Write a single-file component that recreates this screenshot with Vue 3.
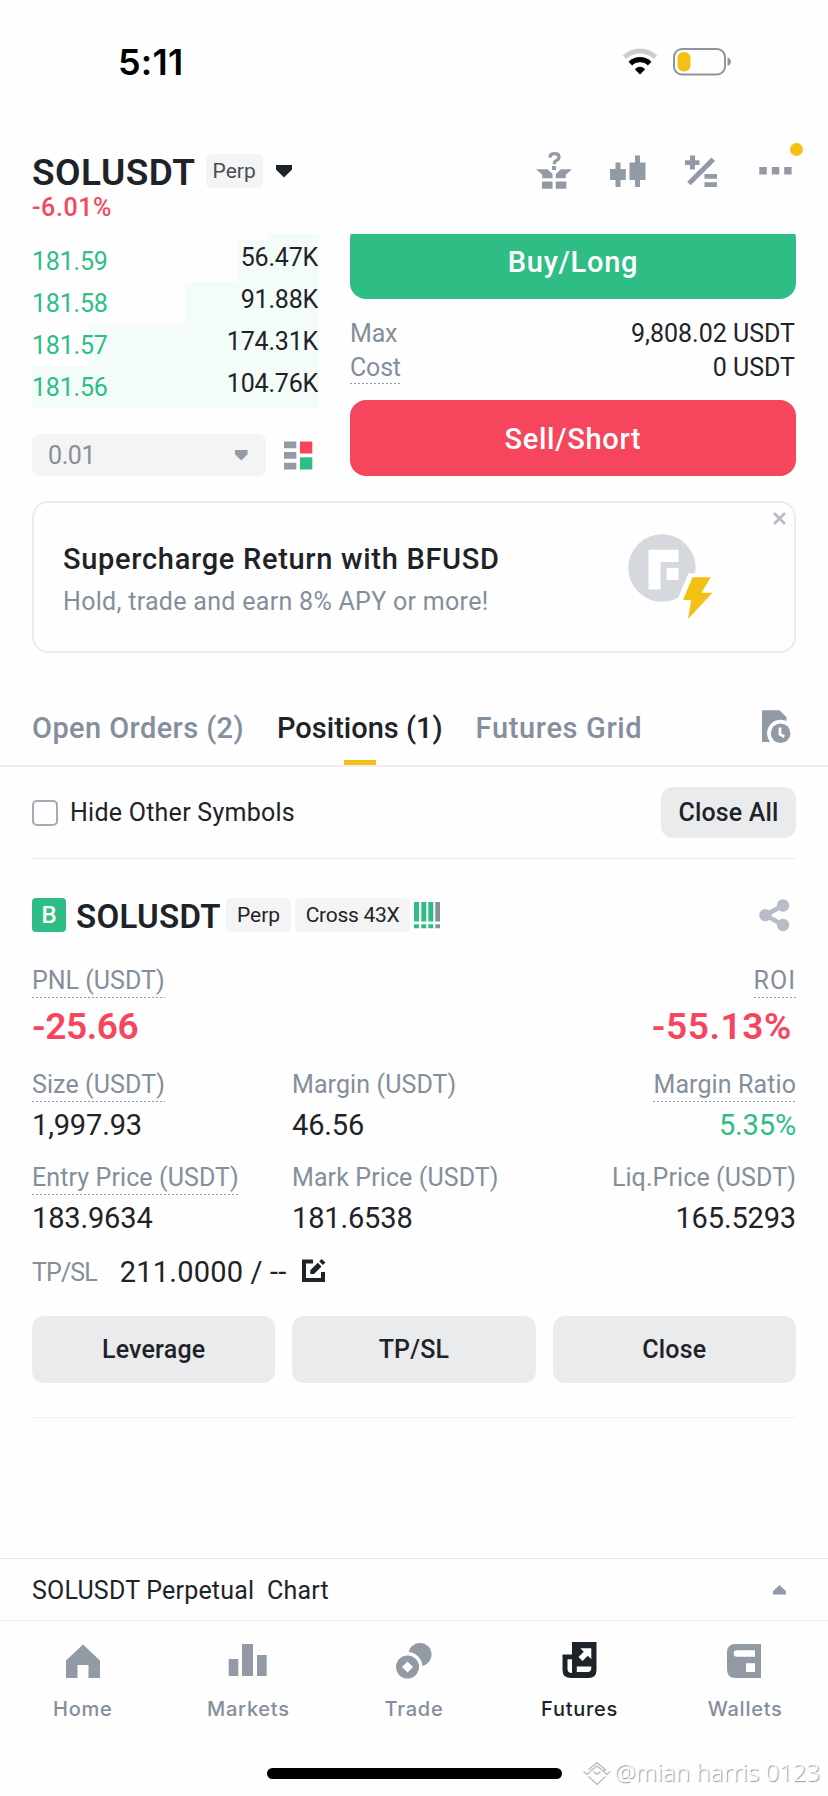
<script setup>
    import {ref} from 'vue'

    const pair = ref('SOLUSDT')
    const hideOthers = ref(false)
    const activeTab = ref('positions')
    const activeNav = ref('Futures')

    // bid depth is the width of the green bar in px
    const bids = ref([
        { price: '181.59', amount: '56.47K', depth: 82 },
        { price: '181.58', amount: '91.88K', depth: 134 },
        { price: '181.57', amount: '174.31K', depth: 230 },
        { price: '181.56', amount: '104.76K', depth: 287 },
    ])

    const tabs = [
        { id: 'orders', label: 'Open Orders (2)' },
        { id: 'positions', label: 'Positions (1)' },
        { id: 'grid', label: 'Futures Grid' },
    ]

    const stats = [
        { label: 'Size (USDT)', value: '1,997.93', hint: true },
        { label: 'Margin (USDT)', value: '46.56' },
        { label: 'Margin Ratio', value: '5.35%', hint: true, green: true },
        { label: 'Entry Price (USDT)', value: '183.9634', hint: true },
        { label: 'Mark Price (USDT)', value: '181.6538' },
        { label: 'Liq.Price (USDT)', value: '165.5293' },
    ]

    const actions = ['Leverage', 'TP/SL', 'Close']
    const navItems = ['Home', 'Markets', 'Trade', 'Futures', 'Wallets']
</script>

<template>
    <main class="screen">
        <div class="status-bar">
            <span class="time">5:11</span>
            <div class="status-icons">
                <svg class="wifi" width="36" height="27" viewBox="0 0 36 27">
                    <path d="M2.500 9.300 A22.500 22.500 0 0 1 33.500 9.300" fill="none" stroke="#c9ccd1" stroke-width="5"/>
                    <path d="M8.300 15.600 A14 14 0 0 1 27.700 15.600" fill="none" stroke="#000" stroke-width="5.200"/>
                    <path d="M12.800 21.200 Q18 16.400 23.200 21.200 L18 26.500 Z" fill="#000"/>
                </svg>
                <svg class="battery" width="58" height="28" viewBox="0 0 58 28">
                    <rect x="1" y="1" width="51" height="25.500" rx="8" fill="none" stroke="#8f949a" stroke-width="2"/>
                    <rect x="4.500" y="4" width="13" height="19.500" rx="6" fill="#f5c014"/>
                    <path d="M54.500 9.500 Q58 11 58 13.800 Q58 16.500 54.500 18 Z" fill="#8f949a"/>
                </svg>
            </div>
        </div>

        <header class="top-bar">
            <div class="pair">
                <div class="pair-line">
                    <h1>{{ pair }}</h1>
                    <span class="tag">Perp</span>
                    <svg width="16" height="13" viewBox="0 0 16 13"><path d="M0 0H16V4.500L8 12.500L0 4.500Z" fill="#1e2329"/></svg>
                </div>
                <div class="change">-6.01%</div>
            </div>
            <div class="tools">
                <svg class="gift" width="36" height="37" viewBox="0 0 36 37" fill="#929aa5">
                    <path d="M13.800 5.500 Q14.200 1.600 18.700 1.600 Q23 1.600 23 5 Q23 7.300 20.500 8.500 Q18.200 9.500 18.200 12.300" fill="none" stroke="#929aa5" stroke-width="3.200"/>
                    <path d="M16 14H20V18H16Z"/>
                    <path d="M0 17.200H11.500L16.500 22V26.200H6.300V22.800Z"/>
                    <path d="M36 17.200H24.800L19.800 22V26.200H29.800V22.800Z"/>
                    <path d="M6 29.500H16.500V36.700H6ZM19.800 29.500H30.300V36.700H19.800Z"/>
                </svg>
                <svg class="candles" width="36" height="33" viewBox="0 0 36 33" fill="#929aa5">
                    <path d="M5.500 7.500H10.500V14H15.800V25H10.500V32H5.500V25H0V14H5.500Z"/>
                    <path d="M25 .5H30V7.500H35.500V25H30V32H25V25H19.500V7.500H25Z"/>
                </svg>
                <svg class="calc" width="33" height="33" viewBox="0 0 33 33" fill="#929aa5">
                    <path d="M5 .5H10V5.300H14.500V10H10V14.500H5V10H0V5.300H5Z"/>
                    <path d="M26.500 2.500L30 6L5.700 30.300L2.200 26.800Z"/>
                    <path d="M19.500 19H32V23.700H19.500ZM19.500 27.300H32V32H19.500Z"/>
                </svg>
                <div class="more">
                    <svg width="33" height="8" viewBox="0 0 33 8" fill="#929aa5">
                        <path d="M.3 0H7.800V7.600H.3ZM12.800 0H20.300V7.600H12.800ZM25.200 0H32.600V7.600H25.200Z"/>
                    </svg>
                    <i class="dot"></i>
                </div>
            </div>
        </header>

        <section class="trade">
            <div class="book">
                <div class="sliver"></div>
                <div v-for="bid in bids" :key="bid.price" class="bid">
                    <div class="depth" :style="{ width: bid.depth + 'px' }"></div>
                    <span class="price">{{ bid.price }}</span>
                    <span class="amount">{{ bid.amount }}</span>
                </div>
                <div class="book-foot">
                    <div class="step">
                        <span>0.01</span>
                        <svg width="13" height="11" viewBox="0 0 13 11"><path d="M0 0H12.600V4.300L6.300 10.500L0 4.300Z" fill="#929aa5"/></svg>
                    </div>
                    <svg width="29" height="29" viewBox="0 0 29 29">
                        <path d="M0 .5H12.300V7.200H0ZM0 11H12.300V17.800H0ZM0 21.700H12.300V28.500H0Z" fill="#929aa5"/>
                        <path d="M16 .5H28.300V12.500H16Z" fill="#f6465d"/>
                        <path d="M16 16.300H28.300V28.500H16Z" fill="#2ebd85"/>
                    </svg>
                </div>
            </div>
            <div class="order">
                <div class="buy-clip"><button class="big buy">Buy/Long</button></div>
                <div class="info">
                    <div class="info-row"><span class="grey">Max</span><span class="amt">9,808.02 USDT</span></div>
                    <div class="info-row"><span class="grey hint">Cost</span><span class="amt">0 USDT</span></div>
                </div>
                <button class="big sell">Sell/Short</button>
            </div>
        </section>

        <section class="banner">
            <div class="banner-text">
                <h2>Supercharge Return with BFUSD</h2>
                <p>Hold, trade and earn 8% APY or more!</p>
            </div>
            <svg class="coin" width="86" height="88" viewBox="0 0 86 88">
                <circle cx="34" cy="34" r="33.700" fill="#d5d8dd"/>
                <path d="M20.500 15.800H50.500V28H32.500V55.500H20.500ZM38.500 34H50.500V46H38.500Z" fill="#fff"/>
                <path d="M60.500 39.300H70V80L48 69.500Z" fill="#fff"/>
                <path d="M64.500 43.300H82.700L73.500 58.700H84.500L60 85L63.200 66H55Z" fill="#f5c014"/>
            </svg>
            <svg class="close-icon" width="13" height="13" viewBox="0 0 13 13"><path d="M1 1L12 12M12 1L1 12" stroke="#b7bdc6" stroke-width="2.700"/></svg>
        </section>

        <nav class="tabs">
            <button v-for="tab in tabs" :key="tab.id" :class="['tab', tab.id, { active: activeTab === tab.id }]" @click="activeTab = tab.id">{{ tab.label }}</button>
            <svg class="history" width="29" height="34" viewBox="0 0 29 34">
                <path d="M0 .3H17.500L24.500 7.300V32H0Z" fill="#929aa5"/>
                <circle cx="18.600" cy="23.300" r="13.500" fill="#fff"/>
                <circle cx="18.600" cy="23.300" r="9.800" fill="#929aa5"/>
                <path d="M18 17.500V24.300L22.300 26.800" fill="none" stroke="#fff" stroke-width="2.800"/>
            </svg>
        </nav>

        <div class="filter">
            <label><i class="box" @click="hideOthers = !hideOthers"></i><span>Hide Other Symbols</span></label>
            <button class="close-all">Close All</button>
        </div>

        <section class="position">
            <div class="position-head">
                <span class="side">B</span>
                <h3>{{ pair }}</h3>
                <span class="tag wide">Perp</span>
                <span class="tag wide cross">Cross 43X</span>
                <svg class="risk" width="28" height="27" viewBox="0 0 28 27">
                    <path d="M0 0H5V19.500H0ZM7.300 0H12.300V19.500H7.300ZM14.300 0H19.300V19.500H14.300ZM0 22.300H5V26.300H0ZM7.300 22.300H12.300V26.300H7.300ZM14.300 22.300H19.300V26.300H14.300Z" fill="#2ebd85"/>
                    <path d="M21.300 0H26V19.500H21.300ZM21.300 22.300H26V26.300H21.300Z" fill="#848e9c"/>
                </svg>
                <svg class="share" width="31" height="33" viewBox="0 0 31 33" fill="#b7bdc6">
                    <path d="M24 6.500L6.500 16.200L24 26" fill="none" stroke="#b7bdc6" stroke-width="4.500"/>
                    <circle cx="6.500" cy="16.200" r="6.200"/>
                    <circle cx="24" cy="6.500" r="6.200"/>
                    <circle cx="24" cy="26" r="6.200"/>
                </svg>
            </div>

            <div class="pnl">
                <div>
                    <span class="grey hint">PNL (USDT)</span>
                    <strong>-25.66</strong>
                </div>
                <div class="right">
                    <span class="grey hint">ROI</span>
                    <strong>-55.13%</strong>
                </div>
            </div>

            <div class="stats">
                <div v-for="stat in stats" :key="stat.label" class="stat">
                    <span class="grey" :class="{ hint: stat.hint }">{{ stat.label }}</span>
                    <b :class="{ green: stat.green }">{{ stat.value }}</b>
                </div>
            </div>

            <div class="tpsl">
                <span class="grey">TP/SL</span>
                <b>211.0000 / --</b>
                <svg width="24" height="25" viewBox="0 0 24 25" fill="#1e2329">
                    <path d="M0 1.500H11V5.500H4V20H19V14H23V24H0Z"/>
                    <path d="M8.300 12.300L15.800 4.800L19.500 8.500L12 16H8.300ZM17.200 3.400L19.700 .9L23.400 4.600L20.900 7.100Z"/>
                </svg>
            </div>

            <div class="actions">
                <button v-for="action in actions" :key="action">{{ action }}</button>
            </div>
        </section>

        <div class="chart-bar">
            <span>SOLUSDT Perpetual&nbsp; Chart</span>
            <svg width="13" height="10" viewBox="0 0 13 10"><path d="M6.500 0L13 6.300V9.500H0V6.300Z" fill="#929aa5"/></svg>
        </div>

        <nav class="bottom-nav">
            <button v-for="item in navItems" :key="item" :class="{ active: activeNav === item }" @click="activeNav = item">
                <svg v-if="item === 'Home'" width="40" height="38" viewBox="0 0 40 38" fill="#929aa5">
                    <path d="M20 2.500L37 18.500V36H25.500V23H14.500V36H3V18.500Z"/>
                </svg>
                <svg v-else-if="item === 'Markets'" width="40" height="38" viewBox="0 0 40 38" fill="#929aa5">
                    <path d="M.7 17H10.300V34H.7ZM14 2H25V34H14ZM29 13H38.700V34H29Z"/>
                </svg>
                <svg v-else-if="item === 'Trade'" width="40" height="38" viewBox="0 0 40 38" fill="#929aa5">
                    <circle cx="26" cy="12.500" r="11.500"/>
                    <circle cx="13.500" cy="25" r="15" fill="#fff"/>
                    <circle cx="13.500" cy="25" r="11.500"/>
                    <path d="M13.500 19.500L19 25L13.500 30.500L8 25Z" fill="#fff"/>
                </svg>
                <svg v-else-if="item === 'Futures'" width="40" height="38" viewBox="0 0 40 38">
                    <path d="M12 0H36.500V28Q36.500 36 28.500 36H11Q2.500 36 2.500 28V12.500H12Z" fill="#1e2329"/>
                    <path d="M7.500 17.300H12V31Q7.500 31 7.500 27ZM16.800 24.500H31.300V26Q31.300 30 27.500 30H16.800Z" fill="#fff"/>
                    <path d="M20.300 6.200H31.300V17.200L27.800 13.700L22.500 19L18.500 15L23.800 9.700Z" fill="#fff"/>
                </svg>
                <svg v-else width="40" height="38" viewBox="1 0 40 38">
                    <path d="M11.500 2H37V36H11.500Q3 36 3 27.500V10.500Q3 2 11.500 2Z" fill="#929aa5"/>
                    <path d="M13 8.300H31V14.800H13Q9.700 14.800 9.700 11.500Q9.700 8.300 13 8.300ZM22 21.300H31V30H22Z" fill="#fff"/>
                </svg>
                <span>{{ item }}</span>
            </button>
        </nav>

        <footer class="home-area">
            <i class="home-indicator"></i>
            <div class="watermark">
                <svg width="28" height="24" viewBox="0 0 28 24" fill="none" stroke="#b4b6b9" stroke-width="1.200">
                    <path d="M5.500 7.500L14 .8L22.500 7.500L20.500 9L14 4L7.500 9M.5 9.500L4 12.500L7.500 9.500M20.500 9.500L24 12.500L27.500 9.500M10.500 9.500L14 12.500L17.500 9.500M5.500 14.500L14 22.500L22.500 14.500"/>
                </svg>
                <span>@mian harris 0123</span>
            </div>
        </footer>
    </main>
</template>

<style>
body{
    background-color: #fefefe;
}
</style>

<style scoped>
.screen{
    width: 828px;
    height: 1796px;
    overflow: hidden;
    display: flex;
    flex-direction: column;
    background-color: #fefefe;
    color: #1e2329;
    font-family: Roboto, "Liberation Sans", sans-serif;
    font-size: 25px;
}
svg{
    display: block;
    flex: none;
}
h1, h2, h3, p{
    margin: 0;
}
button{
    border: none;
    padding: 0;
    background: none;
    font: inherit;
    color: inherit;
    cursor: pointer;
}
b{
    font-weight: 400;
}
.grey{
    color: #848e9c;
}
.hint{
    padding-bottom: 5px;
    background: repeating-linear-gradient(90deg, #929aa5 0 2px, transparent 2px 4px) left bottom / 100% 1px no-repeat;
}
.green{
    color: #2ebd85;
}

/* status bar */
.status-bar{
    height: 124px;
    box-sizing: border-box;
    padding: 42px 97px 0 118px;
    display: flex;
    justify-content: space-between;
}
.time{
    font-family: Inter, sans-serif;
    font-size: 36px;
    font-weight: 600;
    line-height: 40px;
    color: #000;
    letter-spacing: 0.2px;
}
.status-icons{
    display: flex;
    gap: 15px;
    padding-top: 6px;
}

/* top bar */
.top-bar{
    height: 110px;
    box-sizing: border-box;
    padding: 26px 32px 0;
    display: flex;
    justify-content: space-between;
}
.pair-line{
    display: flex;
    align-items: center;
    height: 42px;
}
h1{
    font-size: 37px;
    font-weight: 600;
    line-height: 42px;
    padding-top: 4px;
    letter-spacing: 0.5px;
}
.tag{
    height: 34px;
    padding: 0 7px;
    margin: 0 13px 0 10px;
    border-radius: 5px;
    background-color: #f4f4f5;
    color: #474d57;
    font-size: 21px;
    line-height: 34px;
}
.change{
    margin-top: 2px;
    line-height: 28px;
    font-weight: 500;
    letter-spacing: 0.6px;
    color: #f6465d;
}
.tools{
    display: flex;
    align-items: flex-start;
}
.gift{
    margin-top: 2px;
}
.candles{
    margin: 5px 0 0 38px;
}
.calc{
    margin: 5px 0 0 39px;
}
.more{
    position: relative;
    margin: 17px 4px 0 41px;
}
.dot{
    position: absolute;
    top: -24px;
    right: -11px;
    width: 13px;
    height: 13px;
    border-radius: 50%;
    background-color: #f5c014;
}

/* order book and order form */
.trade{
    height: 267px;
    padding: 0 32px;
    display: flex;
    gap: 31px;
}
.book{
    width: 287px;
    display: flex;
    flex-direction: column;
}
.sliver{
    height: 6px;
    width: 51px;
    align-self: flex-end;
    background-color: #f4fcf9;
}
.bid{
    position: relative;
    height: 42px;
    display: flex;
    justify-content: space-between;
    line-height: 44px;
    letter-spacing: -0.2px;
}
.depth{
    position: absolute;
    top: 0;
    right: 0;
    height: 42px;
    background-color: #f4fcf9;
}
.price{
    position: relative;
    color: #2ebd85;
}
.amount{
    position: relative;
    height: 36px;
    padding-right: 1px;
    line-height: 36px;
}
.book-foot{
    margin-top: 26px;
    padding-right: 6px;
    display: flex;
    align-items: center;
    justify-content: space-between;
}
.step{
    width: 234px;
    height: 42px;
    box-sizing: border-box;
    padding: 0 18px 0 16px;
    border-radius: 8px;
    background-color: #f4f4f4;
    color: #848e9c;
    letter-spacing: -0.4px;
    display: flex;
    align-items: center;
    justify-content: space-between;
}
.order{
    width: 446px;
}
.buy-clip{
    height: 65px;
    overflow: hidden;
    display: flex;
    align-items: flex-end;
}
.big{
    width: 446px;
    height: 76px;
    flex: none;
    padding-top: 2px;
    border-radius: 16px;
    color: #fff;
    font-size: 29px;
    font-weight: 500;
    letter-spacing: 0.7px;
}
.buy{
    background-color: #2ebd85;
}
.sell{
    background-color: #f6465d;
}
.info{
    height: 101px;
    box-sizing: border-box;
    padding-top: 17px;
}
.info-row{
    height: 34px;
    display: flex;
    justify-content: space-between;
    align-items: flex-start;
    line-height: 36px;
}
.info-row .grey{
    letter-spacing: -0.2px;
}
.info-row .hint{
    height: 34px;
    padding-bottom: 0;
}
.amt{
    padding-right: 1px;
}

/* banner */
.banner{
    position: relative;
    margin: 0 32px;
    height: 152px;
    flex: none;
    box-sizing: border-box;
    border: 2px solid #eaecef;
    border-radius: 16px;
    padding: 0 80px 0 29px;
    display: flex;
    justify-content: space-between;
}
.banner-text{
    padding-top: 38px;
}
h2{
    font-size: 29px;
    font-weight: 500;
    line-height: 36px;
    letter-spacing: 0.7px;
}
.banner p{
    margin-top: 8px;
    line-height: 34px;
    letter-spacing: 0.3px;
    color: #848e9c;
}
.coin{
    margin-top: 31px;
}
.close-icon{
    position: absolute;
    top: 9px;
    right: 8px;
}

/* tabs */
.tabs{
    height: 114px;
    flex: none;
    box-sizing: border-box;
    padding: 0 37px 0 32px;
    border-bottom: 2px solid #eeeff1;
    display: flex;
    align-items: flex-end;
    gap: 33px;
}
.tab{
    position: relative;
    height: 72px;
    padding-bottom: 2px;
    font-size: 29px;
    font-weight: 500;
    color: #848e9c;
    white-space: nowrap;
}
.orders{
    letter-spacing: 0.4px;
}
.grid{
    letter-spacing: 0.65px;
}
.tab.active{
    color: #1e2329;
}
.tab.active::after{
    content: "";
    position: absolute;
    left: 50%;
    bottom: 0;
    width: 32px;
    height: 5px;
    margin-left: -16px;
    background-color: #f5c014;
}
.history{
    margin: 0 0 21px auto;
}

/* filter row */
.filter{
    height: 92px;
    flex: none;
    box-sizing: border-box;
    margin: 0 32px;
    border-bottom: 1px solid #eaecef;
    display: flex;
    align-items: center;
    justify-content: space-between;
}
.filter label{
    display: flex;
    align-items: center;
    gap: 12px;
    letter-spacing: 0.25px;
}
.box{
    width: 26px;
    height: 26px;
    box-sizing: border-box;
    border: 2px solid #a4abb5;
    border-radius: 5px;
}
.close-all{
    width: 135px;
    height: 51px;
    border-radius: 12px;
    background-color: #eaebed;
    font-weight: 500;
    letter-spacing: 0.15px;
}

/* position card */
.position{
    flex: none;
    height: 559px;
    box-sizing: border-box;
    margin: 0 32px;
    padding-top: 39px;
    border-bottom: 1px solid #eff0f2;
}
.position-head{
    display: flex;
    align-items: center;
    height: 34px;
}
.side{
    width: 34px;
    height: 34px;
    border-radius: 4px;
    background-color: #2ebd85;
    color: #fff;
    font-size: 24px;
    font-weight: 500;
    line-height: 34px;
    text-align: center;
}
h3{
    width: 150px;
    padding: 2px 0 0 10px;
    box-sizing: content-box;
    font-size: 33px;
    font-weight: 600;
    letter-spacing: 0.3px;
}
.tag.wide{
    width: 65px;
    box-sizing: border-box;
    margin: 0 4px 0 0;
    padding: 0;
    text-align: center;
    color: #1e2329;
}
.tag.cross{
    width: 115px;
    letter-spacing: -0.3px;
}
.share{
    margin: 0 6px 0 auto;
}
.pnl{
    display: flex;
    justify-content: space-between;
    height: 111px;
    margin-top: 31px;
}
.pnl > div, .stat{
    display: flex;
    flex-direction: column;
    align-items: flex-start;
}
.pnl .grey{
    height: 30px;
    line-height: 36px;
}
.pnl > .right{
    align-items: flex-end;
}
.right .grey{
    letter-spacing: 1px;
}
.pnl strong{
    margin-top: 8px;
    font-size: 37px;
    font-weight: 600;
    line-height: 42px;
    letter-spacing: -0.4px;
    color: #f6465d;
}
.pnl > .right strong{
    padding-right: 4px;
    letter-spacing: 0.6px;
}
.stats{
    display: grid;
    grid-template-columns: 260px 260px 1fr;
    grid-auto-rows: 93px;
    margin-top: -6px;
}
.stat .grey{
    height: 34px;
    box-sizing: border-box;
    padding-bottom: 0;
    line-height: 33px;
    letter-spacing: 0.1px;
}
.stat b{
    margin-top: 1px;
    font-size: 29px;
    line-height: 44px;
    letter-spacing: -0.15px;
}
.stat:nth-child(3n){
    align-items: flex-end;
}
.tpsl{
    display: flex;
    align-items: center;
    height: 36px;
}
.tpsl .grey{
    letter-spacing: -0.9px;
}
.tpsl b{
    margin: 0 15px 0 23px;
    font-size: 29px;
    letter-spacing: 0.2px;
}
.tpsl svg{
    margin-bottom: 3px;
}
.actions{
    display: grid;
    grid-template-columns: repeat(3, 1fr);
    gap: 17px;
    margin-top: 26px;
}
.actions button{
    height: 67px;
    border-radius: 12px;
    background-color: #eaebed;
    font-weight: 500;
    letter-spacing: 0.2px;
}

/* chart bar */
.chart-bar{
    height: 63px;
    flex: none;
    box-sizing: border-box;
    margin-top: 140px;
    padding: 0 42px 0 32px;
    border-top: 1px solid #e6e8ea;
    border-bottom: 1px solid #eeeff1;
    display: flex;
    align-items: center;
    justify-content: space-between;
}
.chart-bar span{
    padding-top: 2px;
    letter-spacing: 0.2px;
}

/* bottom nav */
.bottom-nav{
    height: 128px;
    flex: none;
    display: grid;
    grid-template-columns: repeat(5, 1fr);
}
.bottom-nav button{
    display: flex;
    flex-direction: column;
    align-items: center;
    padding-top: 21px;
    font-family: Inter, sans-serif;
    font-size: 20px;
    font-weight: 500;
    line-height: 28px;
    letter-spacing: 0.75px;
    color: #848e9c;
}
.bottom-nav span{
    margin-top: 15px;
}
.bottom-nav .active{
    color: #1e2329;
}

.home-area{
    position: relative;
    height: 47px;
}
.home-indicator{
    display: block;
    margin: 19px auto 0;
    width: 295px;
    height: 11px;
    border-radius: 6px;
    background-color: #000;
}
.watermark{
    position: absolute;
    right: 8px;
    top: 8px;
    display: flex;
    align-items: center;
    gap: 3px;
    font-family: "Noto Sans", sans-serif;
    font-size: 24px;
    font-weight: 300;
    line-height: 30px;
    color: #fff;
    text-shadow: 1px 1px 1px #8d8f92;
    white-space: nowrap;
}
.watermark svg{
    margin-top: 4px;
}
</style>
